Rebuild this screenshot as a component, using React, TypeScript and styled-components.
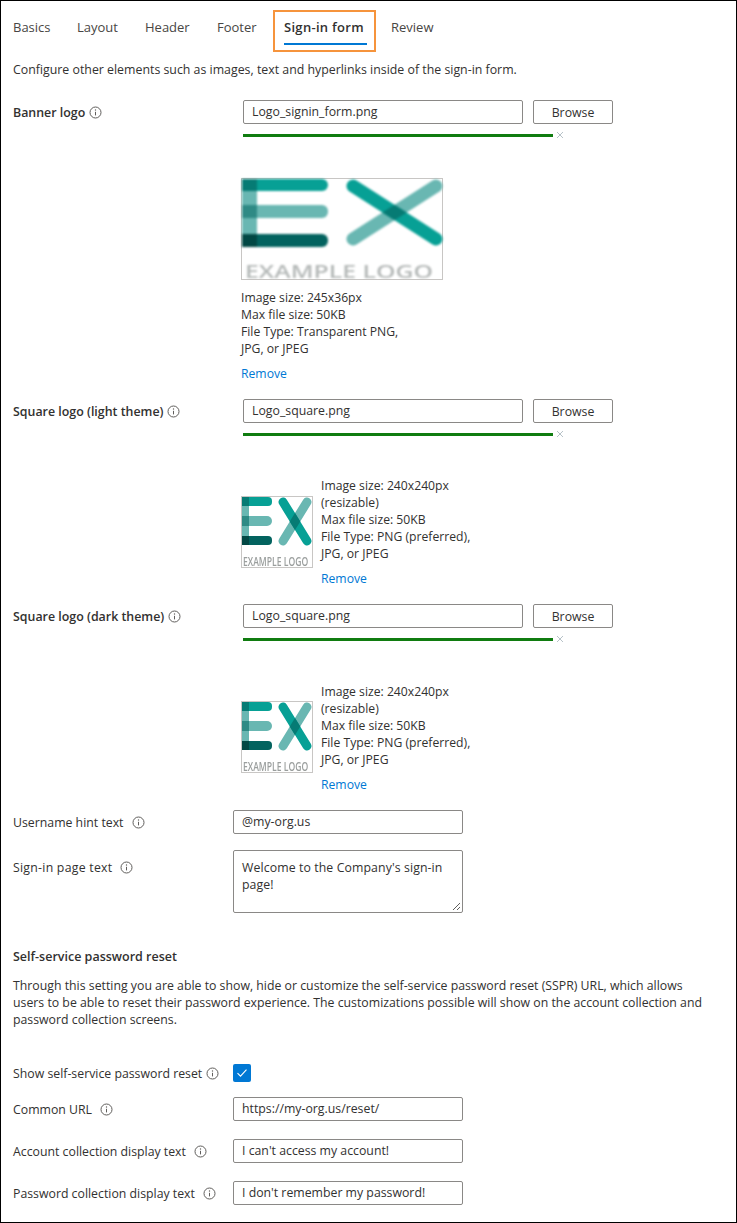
import React from 'react';
import styled, { createGlobalStyle } from 'styled-components';

const GlobalStyle = createGlobalStyle`
    html, body {
        margin: 0;
        padding: 0;
        background: #fff;
    }
    body {
        font-family: "Open Sans", "Noto Sans", "Liberation Sans", sans-serif;
        font-size: 12.3px;
        color: #323130;
    }
`;

const Frame = styled.div`
    box-sizing: border-box;
    width: 737px;
    height: 1223px;
    border: 1px solid #000;
    padding: 9px 12px 0;
    overflow: hidden;
`;

const Tabs = styled.div`
    display: flex;
    height: 42px;
`;

const Tab = styled.div<{ $active?: boolean; $width: number }>`
    box-sizing: border-box;
    width: ${p => p.$width}px;
    height: 42px;
    padding-top: 8px;
    font-size: 13px;
    line-height: 18px;
    font-weight: ${p => (p.$active ? 600 : 400)};
    color: ${p => (p.$active ? '#323130' : '#484644')};
    position: relative;
    ${p => p.$active && `
        border: 2px solid #f6943c;
        padding: 6px 0 0 9px;
        margin-right: 15px;
        letter-spacing: 0.3px;
        white-space: nowrap;
        &::after {
            content: '';
            position: absolute;
            left: 9px;
            right: 7px;
            bottom: 5px;
            height: 2px;
            background: #0078d4;
        }
    `}
`;

const Intro = styled.p`
    margin: 9px 0 0;
    line-height: 17px;
    font-size: 12.35px;
`;

const UploadRow = styled.div<{ $top: number }>`
    display: flex;
    margin-top: ${p => p.$top}px;
`;

const StrongLabel = styled.label`
    width: 230px;
    flex: none;
    display: flex;
    align-items: center;
    gap: 4px;
    height: 24px;
    font-weight: 600;
    font-size: 12.4px;
`;

const PlainLabel = styled.label<{ $gap?: number; $drop?: number; $tracking?: number }>`
    box-sizing: border-box;
    width: 220px;
    flex: none;
    display: flex;
    align-items: center;
    gap: ${p => p.$gap ?? 8}px;
    height: ${p => 24 + (p.$drop ?? 0)}px;
    padding-top: ${p => p.$drop ?? 0}px;
    font-size: 12.3px;
    letter-spacing: ${p => p.$tracking ?? 0}px;
`;

const InfoIcon = () => (
    <svg width="13" height="13" viewBox="0 0 13 13" fill="none" style={{ flex: 'none' }}>
        <circle cx="6.5" cy="6.5" r="5.5" stroke="#605e5c" strokeWidth="1" />
        <path d="M6.5 5.8v3.6" stroke="#605e5c" strokeWidth="1" />
        <circle cx="6.5" cy="4" r="0.7" fill="#605e5c" />
    </svg>
);

const FileArea = styled.div`
    display: flex;
    flex-direction: column;
`;

const FileControls = styled.div`
    display: flex;
    gap: 10px;
`;

const TextBox = styled.div<{ $width: number }>`
    box-sizing: border-box;
    width: ${p => p.$width}px;
    height: 24px;
    border: 1px solid #8a8886;
    border-radius: 2px;
    padding: 0 8px;
    line-height: 22px;
    font-size: 12.3px;
    white-space: nowrap;
`;

const BrowseButton = styled.button`
    box-sizing: border-box;
    width: 80px;
    height: 24px;
    border: 1px solid #8a8886;
    border-radius: 2px;
    background: #fff;
    color: #323130;
    font: inherit;
    font-size: 12.3px;
    padding: 0;
`;

const ProgressRow = styled.div`
    display: flex;
    align-items: center;
    margin-top: 9px;
    height: 4px;
`;

const ProgressBar = styled.div`
    width: 310px;
    height: 3px;
    background: #107c10;
`;

const ClearMark = styled.svg`
    margin-left: 3px;
    flex: none;
`;

const BannerPreview = styled.div`
    margin: 41px 0 0 228px;
`;

const ImageFrame = styled.div<{ $width: number; $height: number }>`
    box-sizing: border-box;
    width: ${p => p.$width}px;
    height: ${p => p.$height}px;
    border: 1px solid #c8c6c4;
    flex: none;
`;

const LogoSvg = styled.svg`
    display: block;
    overflow: visible;
`;

const Hints = styled.div<{ $top?: number; $width?: number }>`
    margin-top: ${p => p.$top ?? 0}px;
    width: ${p => p.$width ?? 170}px;
    line-height: 17px;
    font-size: 12.2px;
`;

const RemoveLink = styled.a`
    display: block;
    margin-top: 8px;
    line-height: 17px;
    color: #0078d4;
    font-size: 12.2px;
`;

const SquarePreview = styled.div<{ $top: number }>`
    display: flex;
    gap: 8px;
    margin: ${p => p.$top}px 0 0 228px;
`;

const SquareImageSlot = styled.div<{ $slot: number }>`
    padding-top: ${p => p.$slot}px;
`;

const FieldRow = styled.div<{ $top: number }>`
    display: flex;
    margin-top: ${p => p.$top}px;
`;

const TextArea = styled.div`
    box-sizing: border-box;
    width: 230px;
    height: 63px;
    border: 1px solid #8a8886;
    border-radius: 2px;
    padding: 8px;
    line-height: 17px;
    font-size: 12.3px;
    letter-spacing: 0.1px;
    position: relative;
`;

const ResizeGrip = styled.svg`
    position: absolute;
    right: 1px;
    bottom: 1px;
`;

const SectionTitle = styled.h2`
    margin: 35px 0 0;
    font-size: 12.5px;
    line-height: 17px;
    font-weight: 600;
`;

const SectionText = styled.p`
    margin: 12px 0 0;
    line-height: 17px;
    font-size: 12.3px;
    width: 696px;
`;

const CheckBox = styled.div`
    width: 18px;
    height: 18px;
    margin-top: 3px;
    border-radius: 2px;
    background: #0078d4;
    display: flex;
    align-items: center;
    justify-content: center;
`;

const BannerLogo = () => (
    <LogoSvg width="200" height="100" viewBox="0 0 200 100">
        <g style={{ filter: 'blur(1.1px)' }}>
            <rect x="0" y="0" width="86" height="12" rx="6" fill="#07a095" />
            <rect x="0" y="26" width="86" height="13" rx="6" fill="#69b7b2" />
            <rect x="0" y="55" width="86" height="13" rx="6" fill="#03635f" />
            <rect x="0" y="0" width="15" height="68" fill="#69b7b2" />
            <rect x="0" y="0" width="15" height="12" fill="#067b74" />
            <rect x="0" y="26" width="15" height="13" fill="#2f8a85" />
            <rect x="0" y="55" width="15" height="13" fill="#024844" />
            <path d="M111 60 L194 7" stroke="#69b7b2" strokeWidth="13" strokeLinecap="round" />
            <path d="M111 7 L194 60" stroke="#07a095" strokeWidth="13" strokeLinecap="round" />
            <path d="M140.3 33.5 L152.5 25.8 L164.7 33.5 L152.5 41.2 Z" fill="#067b74" />
            <text x="3" y="99" fontFamily="Open Sans, sans-serif" fontSize="18" fontWeight="600" fill="#b4b8b7" textLength="188" lengthAdjust="spacingAndGlyphs">EXAMPLE LOGO</text>
        </g>
    </LogoSvg>
);

const SquareLogo = () => (
    <LogoSvg width="70" height="70" viewBox="0 0 70 70">
        <g style={{ filter: 'blur(0.35px)' }}>
            <rect x="0" y="0" width="30" height="9" rx="4" fill="#07a095" />
            <rect x="0" y="19" width="30" height="10" rx="5" fill="#69b7b2" />
            <rect x="0" y="39" width="30" height="9" rx="4" fill="#03635f" />
            <rect x="0" y="0" width="7" height="48" fill="#69b7b2" />
            <rect x="0" y="0" width="7" height="9" fill="#067b74" />
            <rect x="0" y="19" width="7" height="10" fill="#2f8a85" />
            <rect x="0" y="39" width="7" height="9" fill="#024844" />
            <path d="M41 44 L65 5" stroke="#69b7b2" strokeWidth="9" strokeLinecap="round" />
            <path d="M41 5 L65 44" stroke="#07a095" strokeWidth="9" strokeLinecap="round" />
            <path d="M47.7 24.5 L53 15.9 L58.3 24.5 L53 33.1 Z" fill="#067b74" />
            <text transform="translate(1 69) scale(1 1.5)" fontFamily="Open Sans, sans-serif" fontSize="8.6" fontWeight="600" fill="#9a9e9d">EXAMPLE LOGO</text>
        </g>
    </LogoSvg>
);

const Upload = ({ label, file, top }: { label: string; file: string; top: number }) => (
    <UploadRow $top={top}>
        <StrongLabel>{label} <InfoIcon /></StrongLabel>
        <FileArea>
            <FileControls>
                <TextBox $width={280}>{file}</TextBox>
                <BrowseButton>Browse</BrowseButton>
            </FileControls>
            <ProgressRow>
                <ProgressBar />
                <ClearMark width="8" height="8" viewBox="0 0 8 8">
                    <path d="M1 1l6 6M7 1l-6 6" stroke="#b7c2c8" strokeWidth="1" />
                </ClearMark>
            </ProgressRow>
        </FileArea>
    </UploadRow>
);

const SquareBlock = ({ top, slot }: { top: number; slot: number }) => (
    <SquarePreview $top={top}>
        <SquareImageSlot $slot={slot}>
            <ImageFrame $width={72} $height={72}><SquareLogo /></ImageFrame>
        </SquareImageSlot>
        <div>
            <Hints $width={170}>
                Image size: 240x240px<br />
                (resizable)<br />
                Max file size: 50KB<br />
                File Type: PNG (preferred),<br />
                JPG, or JPEG
            </Hints>
            <RemoveLink>Remove</RemoveLink>
        </div>
    </SquarePreview>
);

export default function App(): JSX.Element {
    return (
        <Frame>
            <GlobalStyle />
            <Tabs>
                <Tab $width={64}>Basics</Tab>
                <Tab $width={68}>Layout</Tab>
                <Tab $width={72}>Header</Tab>
                <Tab $width={56}>Footer</Tab>
                <Tab $active $width={103}>Sign-in form</Tab>
                <Tab $width={60}>Review</Tab>
            </Tabs>
            <Intro>Configure other elements such as images, text and hyperlinks inside of the sign-in form.</Intro>

            <Upload label="Banner logo" file="Logo_signin_form.png" top={22} />
            <BannerPreview>
                <ImageFrame $width={202} $height={102}><BannerLogo /></ImageFrame>
                <Hints $top={9} $width={170}>
                    Image size: 245x36px<br />
                    Max file size: 50KB<br />
                    File Type: Transparent PNG,<br />
                    JPG, or JPEG
                </Hints>
                <RemoveLink>Remove</RemoveLink>
            </BannerPreview>

            <Upload label="Square logo (light theme)" file="Logo_square.png" top={17} />
            <SquareBlock top={41} slot={19} />

            <Upload label="Square logo (dark theme)" file="Logo_square.png" top={17} />
            <SquareBlock top={42} slot={18} />

            <FieldRow $top={17}>
                <PlainLabel>Username hint text <InfoIcon /></PlainLabel>
                <TextBox $width={230}>@my-org.us</TextBox>
            </FieldRow>
            <FieldRow $top={16}>
                <PlainLabel $drop={5} $tracking={0.25}>Sign-in page text <InfoIcon /></PlainLabel>
                <TextArea>
                    Welcome to the Company's sign-in page!
                    <ResizeGrip width="9" height="9" viewBox="0 0 9 9">
                        <path d="M1 8l7-7M5 8l3-3" stroke="#605e5c" strokeWidth="1" />
                    </ResizeGrip>
                </TextArea>
            </FieldRow>

            <SectionTitle>Self-service password reset</SectionTitle>
            <SectionText>
                Through this setting you are able to show, hide or customize the self-service password reset (SSPR) URL, which allows users to be able to reset their password experience. The customizations possible will show on the account collection and password collection screens.
            </SectionText>

            <FieldRow $top={33}>
                <PlainLabel $gap={4}>Show self-service password reset <InfoIcon /></PlainLabel>
                <CheckBox>
                    <svg width="12" height="10" viewBox="0 0 12 10" fill="none">
                        <path d="M1.5 5.2l3 3 6-6.5" stroke="#fff" strokeWidth="1.1" />
                    </svg>
                </CheckBox>
            </FieldRow>
            <FieldRow $top={12}>
                <PlainLabel>Common URL <InfoIcon /></PlainLabel>
                <TextBox $width={230}>https://my-org.us/reset/</TextBox>
            </FieldRow>
            <FieldRow $top={18}>
                <PlainLabel>Account collection display text <InfoIcon /></PlainLabel>
                <TextBox $width={230}>I can't access my account!</TextBox>
            </FieldRow>
            <FieldRow $top={18}>
                <PlainLabel>Password collection display text <InfoIcon /></PlainLabel>
                <TextBox $width={230}>I don't remember my password!</TextBox>
            </FieldRow>
        </Frame>
    );
}
